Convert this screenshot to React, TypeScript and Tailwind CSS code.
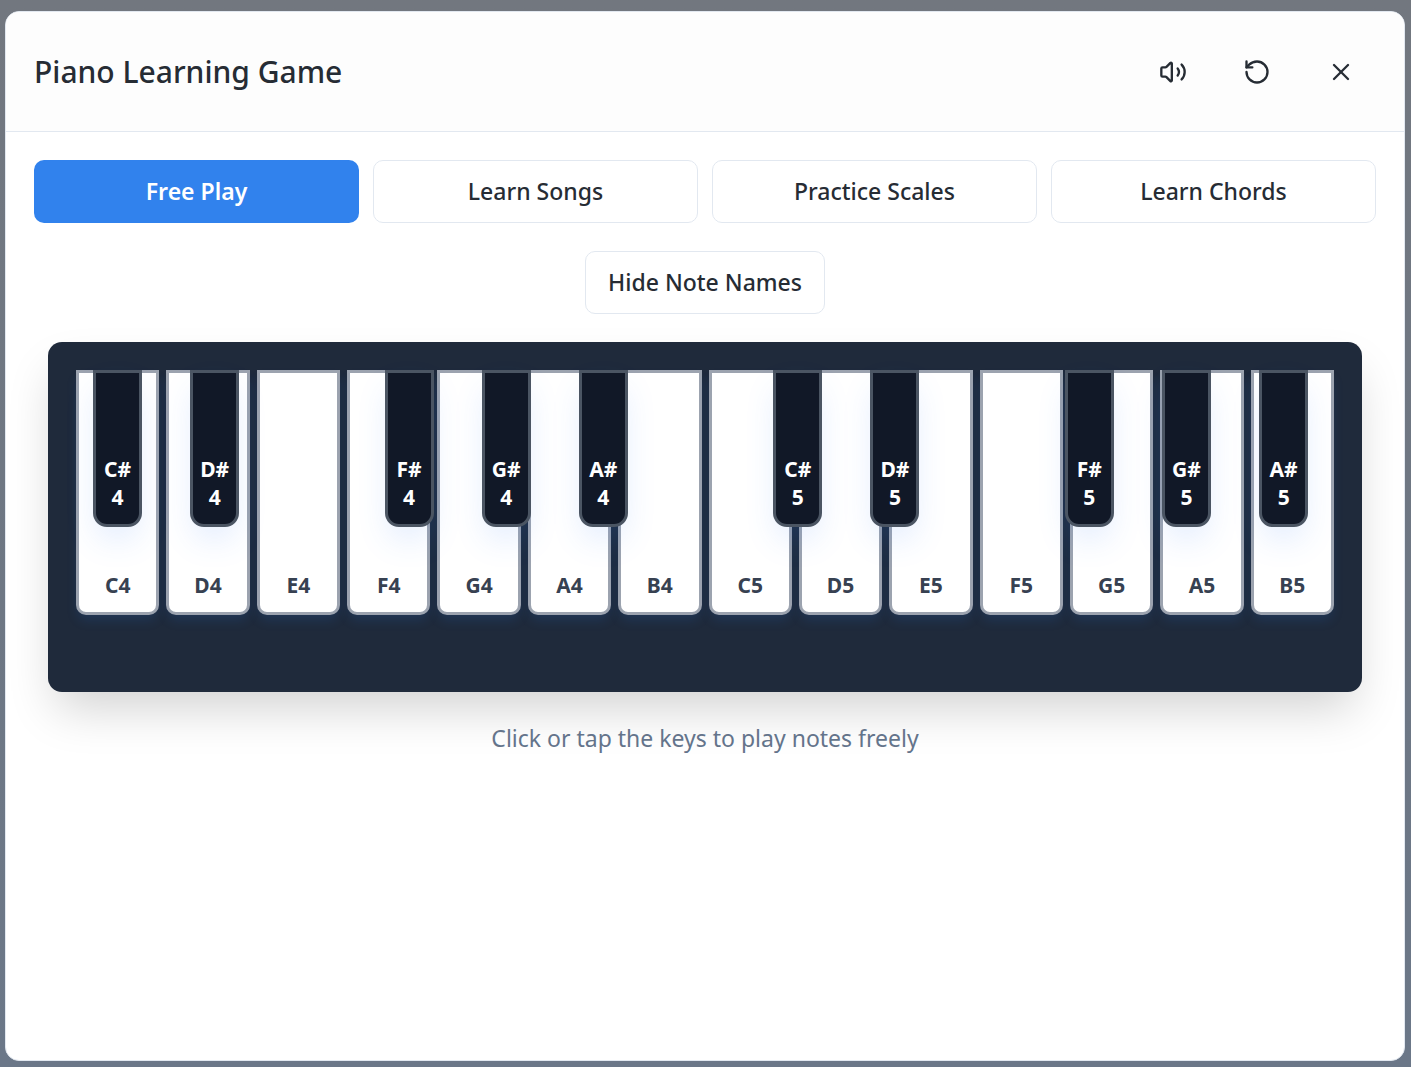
import { RotateCcw, Volume2, X } from "lucide-react";

const modes = ["Free Play", "Learn Songs", "Practice Scales", "Learn Chords"];

const whiteKeys = [
  "C4",
  "D4",
  "E4",
  "F4",
  "G4",
  "A4",
  "B4",
  "C5",
  "D5",
  "E5",
  "F5",
  "G5",
  "A5",
  "B5",
];

// slot = how many steps from the left the key sits
const blackKeys = [
  { note: "C#", octave: 4, slot: 0 },
  { note: "D#", octave: 4, slot: 1 },
  { note: "F#", octave: 4, slot: 3 },
  { note: "G#", octave: 4, slot: 4 },
  { note: "A#", octave: 4, slot: 5 },
  { note: "C#", octave: 5, slot: 7 },
  { note: "D#", octave: 5, slot: 8 },
  { note: "F#", octave: 5, slot: 10 },
  { note: "G#", octave: 5, slot: 11 },
  { note: "A#", octave: 5, slot: 12 },
];

function Header() {
  const iconButton =
    "flex h-[63px] w-[70px] items-center justify-center rounded-[10px]";
  return (
    <header className="flex items-center justify-between border-b border-[#e2e8f0] bg-[#fdfdfd] p-7">
      <h1 className="text-[30px] leading-[42px] font-medium">
        Piano Learning Game
      </h1>
      <div className="flex gap-[14px]">
        <button className={iconButton} aria-label="Sound">
          <Volume2 size={28} />
        </button>
        <button className={iconButton} aria-label="Restart">
          <RotateCcw size={28} />
        </button>
        <button className={iconButton} aria-label="Close">
          <X size={28} />
        </button>
      </div>
    </header>
  );
}

function Piano() {
  return (
    <div className="mx-[14px] mt-7 rounded-[14px] bg-[#1f2a3b] px-7 pt-7 pb-[77px] shadow-[0_24px_48px_-8px_rgba(0,0,0,0.18)]">
      <div className="relative flex gap-[7px]">
        {whiteKeys.map((key) => (
          <button
            key={key}
            className="flex h-[245px] min-w-0 flex-1 items-end justify-center rounded-b-[10px] border-3 border-[#9ca3af] bg-white pb-[13px] text-[21px] leading-7 font-bold text-[#374151] shadow-[0_7px_12px_-2px_rgba(40,110,210,0.18)]"
          >
            {key}
          </button>
        ))}
        {blackKeys.map((key) => (
          <button
            key={key.note + key.octave}
            className="absolute top-0 flex h-[157px] w-[49px] flex-col items-center justify-end rounded-b-[14px] border-3 border-[#4b5563] bg-[#111827] pb-[13px] text-[21px] leading-7 font-bold text-white shadow-[0_16px_32px_-4px_rgba(59,130,246,0.15)]"
            style={{ left: `${1.35 + key.slot * 7.725}%` }}
          >
            <span>{key.note}</span>
            <span>{key.octave}</span>
          </button>
        ))}
      </div>
    </div>
  );
}

export default function App() {
  return (
    <div className="flex min-h-screen bg-linear-to-b from-[#72777f] to-[#6b7788] pt-[11px] pr-[6px] pb-[6px] pl-[5px] font-['Noto_Sans','Open_Sans',sans-serif] text-[#262c34]">
      <div className="flex-1 overflow-hidden rounded-[14px] border border-[#e2e8f0] bg-white">
        <Header />
        <main className="p-7">
          <div className="grid grid-cols-4 gap-[14px]">
            {modes.map((mode, i) => (
              <button
                key={mode}
                className={
                  i === 0
                    ? "h-[63px] rounded-[10px] bg-[#3182ed] text-[23px] font-semibold text-white"
                    : "h-[63px] rounded-[10px] border border-[#e2e8f0] text-[23px] font-medium"
                }
              >
                {mode}
              </button>
            ))}
          </div>
          <div className="mt-7 flex justify-center">
            <button className="h-[63px] rounded-[10px] border border-[#e2e8f0] px-[22px] text-[23px] font-medium">
              Hide Note Names
            </button>
          </div>
          <Piano />
          <p className="mt-7 text-center text-[23px] leading-9 text-[#64748b]">
            Click or tap the keys to play notes freely
          </p>
        </main>
      </div>
    </div>
  );
}
